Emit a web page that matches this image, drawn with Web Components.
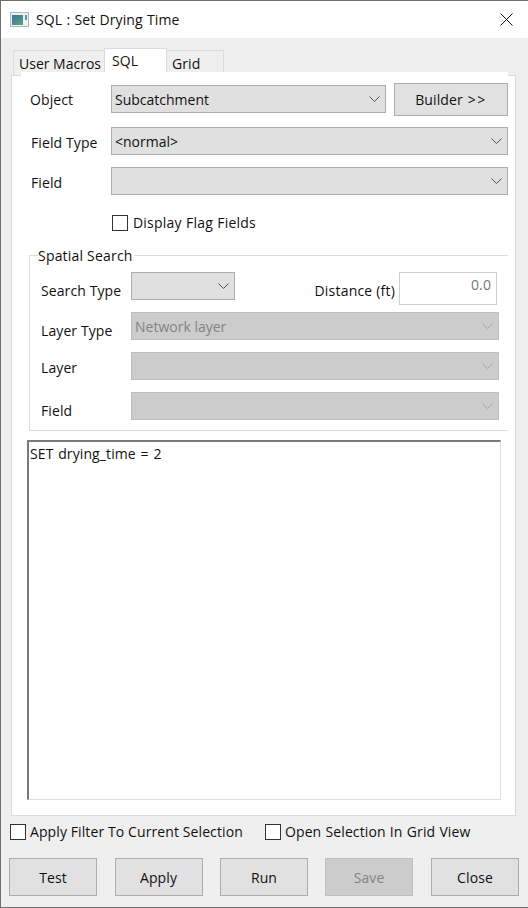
<!DOCTYPE html>
<html>
<head>
<meta charset="utf-8">
<title>SQL : Set Drying Time</title>
<style>
  html, body { margin: 0; padding: 0; background: #efefef; }
  body { font: 14px "Open Sans", "Noto Sans", sans-serif; color: #111; letter-spacing: 0.1px; }
</style>
</head>
<body>

<sql-dialog></sql-dialog>

<script>
(function () {

  const chevron = `<svg width="11" height="6" viewBox="0 0 11 6"><polyline points="0.5,0.5 5.5,5.5 10.5,0.5" fill="none" stroke="currentColor" stroke-width="1"/></svg>`

  class TitleBar extends HTMLElement {
    constructor() {
      super()
      this.attachShadow({mode: 'open'})
      this.shadowRoot.innerHTML = `
        <style>
          :host { display: flex; align-items: center; height: 37px; background: #fff; padding-left: 9px; font-size: 14px; word-spacing: 0.5px; }
          svg.app { width: 19px; height: 15px; margin-right: 7px; flex: none; }
          .title { flex: 1; margin-top: -1px; }
          svg.close { width: 13px; height: 13px; margin-right: 15px; flex: none; }
        </style>
        <svg class="app" viewBox="0 0 19 15">
          <defs>
            <linearGradient id="g" x1="0" y1="0" x2="0.7" y2="1">
              <stop offset="0" stop-color="#3f6fa8"/>
              <stop offset="1" stop-color="#4fa37a"/>
            </linearGradient>
          </defs>
          <rect x="0.5" y="0.5" width="18" height="14" fill="#f1f1f1" stroke="#b5b5b5"/>
          <rect x="2" y="3" width="11" height="10" fill="url(#g)"/>
          <rect x="15" y="3" width="2" height="5" fill="#5f8fb0"/>
        </svg>
        <span class="title"><slot></slot></span>
        <svg class="close" viewBox="0 0 13 13"><path d="M0.5 0.5 L12.5 12.5 M12.5 0.5 L0.5 12.5" stroke="#111" stroke-width="1" fill="none"/></svg>
      `
    }
  }

  class TabStrip extends HTMLElement {
    constructor() {
      super()
      this.attachShadow({mode: 'open'})
      this.shadowRoot.innerHTML = `
        <style>
          :host { display: flex; align-items: flex-end; height: 27px; padding-left: 12px; margin-top: 10px; }
          .tab { box-sizing: border-box; height: 25px; padding: 3px 0 0 5px; border: 1px solid #dcdcdc; border-bottom: 0; background: #efefef; }
          .macros { width: 91px; border-right: 0; letter-spacing: 0; }
          .sql { width: 63px; height: 27px; padding: 2px 0 0 7px; background: #fff; }
          .grid { width: 57px; border-left: 0; }
        </style>
        <div class="tab macros">User Macros</div>
        <div class="tab sql">SQL</div>
        <div class="tab grid">Grid</div>
      `
    }
  }

  class TabPanel extends HTMLElement {
    constructor() {
      super()
      this.attachShadow({mode: 'open'})
      this.shadowRoot.innerHTML = `
        <style>
          :host { display: block; box-sizing: border-box; position: relative; width: 505px; height: 741px; margin: 0 0 0 10px; padding: 7px 7px 0 18px; background: #fff; border: 1px solid #dcdcdc; }
          .notch { position: absolute; left: 9px; top: -4px; width: 487px; height: 4px; background: #fff; }
        </style>
        <div class="notch"></div>
        <slot></slot>
      `
    }
  }

  class FormRow extends HTMLElement {
    constructor() {
      super()
      this.attachShadow({mode: 'open'})
      this.shadowRoot.innerHTML = `
        <style>
          :host { display: grid; grid-template-columns: var(--label-col, 81px) 1fr; align-items: start; }
          .label { padding: var(--shift, 4px) 0 0 var(--indent, 0); margin-bottom: -12px; line-height: 20px; }
        </style>
        <div class="label"><slot name="label"></slot></div>
        <div><slot></slot></div>
      `
    }
  }

  class WinSelect extends HTMLElement {
    constructor() {
      super()
      this.attachShadow({mode: 'open'})
      this.shadowRoot.innerHTML = `
        <style>
          :host { display: flex; box-sizing: border-box; align-items: center; height: 28px; padding: 0 5px 0 3px; background: #e0e0e0; border: 1px solid #adadad; color: #111; letter-spacing: 0; }
          :host([disabled]) { background: #cccccc; border-color: #bfbfbf; color: #838383; }
          .value { flex: 1; }
          svg { flex: none; color: #555; }
          :host([disabled]) svg { color: #a3a3a3; }
        </style>
        <span class="value"><slot></slot></span>
        ${chevron}
      `
    }
  }

  class WinButton extends HTMLElement {
    constructor() {
      super()
      this.attachShadow({mode: 'open'})
      this.shadowRoot.innerHTML = `
        <style>
          :host { display: flex; box-sizing: border-box; align-items: center; justify-content: center; height: 38px; background: #e1e1e1; border: 1px solid #adadad; color: #111; }
          :host([disabled]) { background: #cccccc; border-color: #bfbfbf; color: #838383; }
        </style>
        <slot></slot>
      `
    }
  }

  class WinCheck extends HTMLElement {
    constructor() {
      super()
      this.attachShadow({mode: 'open'})
      this.shadowRoot.innerHTML = `
        <style>
          :host { display: inline-flex; align-items: center; gap: var(--check-gap, 4px); line-height: 16px; }
          .box { box-sizing: border-box; width: 16px; height: 16px; background: #fff; border: 1px solid #333; flex: none; }
        </style>
        <span class="box"></span><span><slot></slot></span>
      `
    }
  }

  class GroupBox extends HTMLElement {
    constructor() {
      super()
      this.attachShadow({mode: 'open'})
      this.shadowRoot.innerHTML = `
        <style>
          :host { display: block; box-sizing: border-box; position: relative; height: 176px; padding: 16px 9px 0 11px; border: 1px solid #dcdcdc; border-right: 0; }
          .legend { position: absolute; left: 8px; top: -10px; padding: 0 1px 0 0; line-height: 20px; background: #fff; letter-spacing: 0.2px; }
        </style>
        <div class="legend"><slot name="legend"></slot></div>
        <slot></slot>
      `
    }
  }

  class SqlEditor extends HTMLElement {
    constructor() {
      super()
      this.attachShadow({mode: 'open'})
      this.shadowRoot.innerHTML = `
        <style>
          :host { display: block; box-sizing: border-box; height: 360px; padding: 2px 0 0 1px; line-height: 20px; word-spacing: 1px; background: #fff; border-style: solid; border-width: 2px 1px 1px 2px; border-color: #7a7a7a #dedede #dedede #7a7a7a; }
        </style>
        <slot></slot>
      `
    }
  }

  class SqlDialog extends HTMLElement {
    constructor() {
      super()
      this.attachShadow({mode: 'open'})
      this.shadowRoot.innerHTML = `
        <style>
          :host { display: block; box-sizing: border-box; width: 528px; height: 908px; background: #efefef; border-top: 1px solid #6e6e6e; border-left: 1px solid #6e6e6e; border-bottom: 1px solid #6e6e6e; overflow: hidden; }
          .object { display: grid; grid-template-columns: 1fr 114px; column-gap: 8px; align-items: start; padding-top: 2px; }
          .object win-button { height: 33px; margin-top: -2px; }
          .arrows { letter-spacing: 1.5px; margin-left: 5px; }
          .r1 { --shift: 7px; }
          .r2 { margin-top: 11px; --shift: 6px; --indent: 1px; }
          .r3 { margin-top: 12px; --shift: 6px; --indent: 1px; }
          .flag { margin: 20px 0 0 82px; letter-spacing: 0.2px; word-spacing: 0.5px; --check-gap: 5px; }
          group-box { margin: 20px 0 0 -1px; --label-col: 90px; }
          .search-row { display: flex; align-items: flex-start; justify-content: space-between; }
          .dist { display: flex; align-items: flex-start; margin-right: 2px; }
          .dist span { padding-top: 9px; line-height: 20px; margin-right: 4px; letter-spacing: 0.2px; }
          .input { box-sizing: border-box; width: 98px; height: 33px; padding: 2px 5px 0 0; text-align: right; line-height: 20px; background: #fff; border: 1px solid #cfcfcf; color: #6f7780; }
          .g1 { --shift: 9px; }
          .g2 { margin-top: 7px; --shift: 9px; }
          .g3 { margin-top: 12px; --shift: 6px; }
          .g4 { margin-top: 12px; --shift: 9px; }
          sql-editor { margin: 9px 7px 0 -3px; width: 474px; }
          .checks { display: flex; margin: 8px 0 0 9px; }
          .checks win-check { width: 255px; }
          .checks win-check + win-check { word-spacing: 0.5px; }
          .buttons { display: grid; grid-template-columns: repeat(5, 88px); column-gap: 17.5px; margin: 18px 0 0 8px; }
          .buttons win-button[disabled] { position: relative; left: -0.5px; }
        </style>
        <title-bar>SQL : Set Drying Time</title-bar>
        <tab-strip></tab-strip>
        <tab-panel>
          <form-row class="r1">
            <span slot="label">Object</span>
            <div class="object">
              <win-select>Subcatchment</win-select>
              <win-button>Builder <span class="arrows">&gt;&gt;</span></win-button>
            </div>
          </form-row>
          <form-row class="r2">
            <span slot="label">Field Type</span>
            <win-select>&lt;normal&gt;</win-select>
          </form-row>
          <form-row class="r3">
            <span slot="label">Field</span>
            <win-select></win-select>
          </form-row>
          <div class="flag"><win-check>Display Flag Fields</win-check></div>
          <group-box>
            <span slot="legend">Spatial Search</span>
            <form-row class="g1">
              <span slot="label">Search Type</span>
              <div class="search-row">
                <win-select style="width:104px"></win-select>
                <div class="dist"><span>Distance (ft)</span><div class="input">0.0</div></div>
              </div>
            </form-row>
            <form-row class="g2">
              <span slot="label">Layer Type</span>
              <win-select disabled>Network layer</win-select>
            </form-row>
            <form-row class="g3">
              <span slot="label">Layer</span>
              <win-select disabled></win-select>
            </form-row>
            <form-row class="g4">
              <span slot="label">Field</span>
              <win-select disabled></win-select>
            </form-row>
          </group-box>
          <sql-editor>SET drying_time = 2</sql-editor>
        </tab-panel>
        <div class="checks">
          <win-check>Apply Filter To Current Selection</win-check>
          <win-check>Open Selection In Grid View</win-check>
        </div>
        <div class="buttons">
          <win-button>Test</win-button>
          <win-button>Apply</win-button>
          <win-button>Run</win-button>
          <win-button disabled>Save</win-button>
          <win-button>Close</win-button>
        </div>
      `
    }
  }

  window.customElements.define('title-bar', TitleBar)
  window.customElements.define('tab-strip', TabStrip)
  window.customElements.define('tab-panel', TabPanel)
  window.customElements.define('form-row', FormRow)
  window.customElements.define('win-select', WinSelect)
  window.customElements.define('win-button', WinButton)
  window.customElements.define('win-check', WinCheck)
  window.customElements.define('group-box', GroupBox)
  window.customElements.define('sql-editor', SqlEditor)
  window.customElements.define('sql-dialog', SqlDialog)
})()
</script>
</body>
</html>
